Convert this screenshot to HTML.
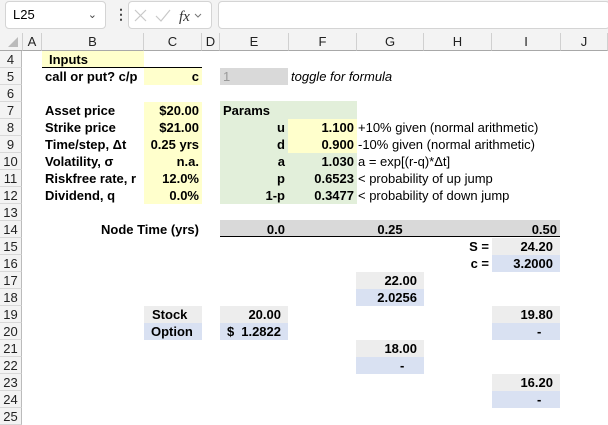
<!DOCTYPE html><html><head><style>
body{margin:0;width:608px;height:414px;overflow:hidden;background:#fff;font-family:"Liberation Sans",Arial,sans-serif;position:relative}
.a{position:absolute;box-sizing:border-box}
.c{position:absolute;box-sizing:border-box;height:17px;line-height:17px;font-size:13px;font-weight:bold;white-space:nowrap;padding:0 3px;color:#000}
.r{text-align:right}.m{text-align:center}
.y{background:#ffffcc}.g{background:#e2efda}.gr{background:#ededed}.bl{background:#d9e1f2}
.n{font-weight:normal}
.rh{position:absolute;left:0;width:22px;height:17px;line-height:17px;font-size:13px;text-align:center;color:#222;border-bottom:1px solid #d8d8d8;border-right:1px solid #bbb;background:#f3f3f3;box-sizing:border-box}
.ch{position:absolute;top:33px;height:18px;line-height:18px;font-size:13px;text-align:center;color:#222;border-right:1px solid #d0d0d0;border-bottom:1px solid #a8a8a8;background:#f3f3f3;box-sizing:border-box}
</style></head><body>
<div class="a" style="left:0;top:0;width:608px;height:33px;background:#f3f3f3"></div>
<div class="a" style="left:5px;top:1px;width:101px;height:28px;background:#fff;border:1px solid #d4d4d4;border-radius:4px;font-size:13px;line-height:26px;padding-left:7px">L25<span style="position:absolute;right:8px;top:0;font-size:11px;color:#444">&#8964;</span></div>
<div class="a" style="left:114px;top:6px;font-size:14px;color:#444;font-weight:bold">⋮</div>
<div class="a" style="left:128px;top:1px;width:84px;height:28px;background:#fff;border:1px solid #d4d4d4;border-radius:4px">
<svg width="84" height="28" style="position:absolute;left:0;top:0"><path d="M6 8l11 11M17 8L6 19" stroke="#c8c8c8" stroke-width="1.2" fill="none"/><path d="M27 14l5 5 9-11" stroke="#c8c8c8" stroke-width="1.2" fill="none"/><text x="50" y="19" font-family="Liberation Serif" font-style="italic" font-size="15" fill="#333">fx</text><path d="M66 12l3 3 3-3" stroke="#777" fill="none"/></svg></div>
<div class="a" style="left:218px;top:1px;width:392px;height:28px;background:#fff;border:1px solid #d4d4d4;border-radius:4px"></div>
<div class="ch" style="left:0;width:23px"><svg width="12" height="12" style="position:absolute;right:3px;bottom:2px"><path d="M11 1V11H1Z" fill="#bbb"/></svg></div>
<div class="ch" style="left:23px;width:19px">A</div>
<div class="ch" style="left:42px;width:102px">B</div>
<div class="ch" style="left:144px;width:58px">C</div>
<div class="ch" style="left:202px;width:18px">D</div>
<div class="ch" style="left:220px;width:69px">E</div>
<div class="ch" style="left:289px;width:68px">F</div>
<div class="ch" style="left:357px;width:67px">G</div>
<div class="ch" style="left:424px;width:68px">H</div>
<div class="ch" style="left:492px;width:69px">I</div>
<div class="ch" style="left:561px;width:47px">J</div>
<div class="rh" style="top:51px">4</div><div class="rh" style="top:68px">5</div><div class="rh" style="top:85px">6</div><div class="rh" style="top:102px">7</div><div class="rh" style="top:119px">8</div><div class="rh" style="top:136px">9</div><div class="rh" style="top:153px">10</div><div class="rh" style="top:170px">11</div><div class="rh" style="top:187px">12</div><div class="rh" style="top:204px">13</div><div class="rh" style="top:221px">14</div><div class="rh" style="top:238px">15</div><div class="rh" style="top:255px">16</div><div class="rh" style="top:272px">17</div><div class="rh" style="top:289px">18</div><div class="rh" style="top:306px">19</div><div class="rh" style="top:323px">20</div><div class="rh" style="top:340px">21</div><div class="rh" style="top:357px">22</div><div class="rh" style="top:374px">23</div><div class="rh" style="top:391px">24</div><div class="rh" style="top:408px">25</div>

<div class="c y" style="left:42px;top:51px;width:102px;padding-left:7px">Inputs</div>
<div class="a" style="left:42px;top:67px;width:160px;height:1px;background:#000"></div>
<div class="c" style="left:42px;top:68px;width:102px">call or put? c/p</div>
<div class="c y r" style="left:144px;top:68px;width:58px">c</div>
<div class="c n" style="left:220px;top:68px;width:68px;background:#d9d9d9;color:#999">1</div>
<div class="c n" style="left:288px;top:68px;font-style:italic">toggle for formula</div>

<div class="c" style="left:42px;top:102px">Asset price</div><div class="c y r" style="left:144px;top:102px;width:58px">$20.00</div>
<div class="c" style="left:42px;top:119px">Strike price</div><div class="c y r" style="left:144px;top:119px;width:58px">$21.00</div>
<div class="c" style="left:42px;top:136px">Time/step, Δt</div><div class="c y r" style="left:144px;top:136px;width:58px">0.25 yrs</div>
<div class="c" style="left:42px;top:153px">Volatility, σ</div><div class="c y r" style="left:144px;top:153px;width:58px">n.a.</div>
<div class="c" style="left:42px;top:170px">Riskfree rate, r</div><div class="c y r" style="left:144px;top:170px;width:58px">12.0%</div>
<div class="c" style="left:42px;top:187px">Dividend, q</div><div class="c y r" style="left:144px;top:187px;width:58px">0.0%</div>

<div class="a g" style="left:220px;top:101px;width:137px;height:103px"></div>
<div class="c" style="left:220px;top:102px">Params</div>
<div class="c r" style="left:220px;top:119px;width:68px">u</div><div class="c y r" style="left:288px;top:119px;width:69px">1.100</div><div class="c n" style="left:355px;top:119px">+10% given (normal arithmetic)</div>
<div class="c r" style="left:220px;top:136px;width:68px">d</div><div class="c y r" style="left:288px;top:136px;width:69px">0.900</div><div class="c n" style="left:355px;top:136px">-10% given (normal arithmetic)</div>
<div class="c r" style="left:220px;top:153px;width:68px">a</div><div class="c r" style="left:288px;top:153px;width:69px">1.030</div><div class="c n" style="left:355px;top:153px">a = exp[(r-q)*Δt]</div>
<div class="c r" style="left:220px;top:170px;width:68px">p</div><div class="c r" style="left:288px;top:170px;width:69px">0.6523</div><div class="c n" style="left:355px;top:170px">&lt; probability of up jump</div>
<div class="c r" style="left:220px;top:187px;width:68px">1-p</div><div class="c r" style="left:288px;top:187px;width:69px">0.3477</div><div class="c n" style="left:355px;top:187px">&lt; probability of down jump</div>

<div class="c r" style="left:42px;top:221px;width:160px">Node Time (yrs)</div>
<div class="a" style="left:220px;top:220px;width:340px;height:17px;background:#d9d9d9;border-bottom:1px solid #000"></div>
<div class="c r" style="left:220px;top:221px;width:68px">0.0</div>
<div class="c m" style="left:356px;top:221px;width:68px">0.25</div>
<div class="c r" style="left:492px;top:221px;width:68px">0.50</div>

<div class="c r" style="left:424px;top:238px;width:68px">S =</div><div class="c gr r" style="left:492px;top:238px;width:68px;padding-right:7px">24.20</div>
<div class="c r" style="left:424px;top:255px;width:68px">c =</div><div class="c bl r" style="left:492px;top:255px;width:68px;padding-right:7px">3.2000</div>
<div class="c gr r" style="left:356px;top:272px;width:68px;padding-right:7px">22.00</div>
<div class="c bl r" style="left:356px;top:289px;width:68px;padding-right:7px">2.0256</div>
<div class="c gr" style="left:144px;top:306px;width:58px;padding-left:8px">Stock</div>
<div class="c bl" style="left:144px;top:323px;width:58px;padding-left:7px">Option</div>
<div class="c gr r" style="left:220px;top:306px;width:68px;padding-right:7px">20.00</div>
<div class="c bl r" style="left:220px;top:323px;width:68px;padding-right:7px"><span style="position:absolute;left:7px">$</span>1.2822</div>
<div class="c gr r" style="left:492px;top:306px;width:68px;padding-right:7px">19.80</div>
<div class="c bl" style="left:492px;top:323px;width:68px;padding-left:45px">-</div>
<div class="c gr r" style="left:356px;top:340px;width:68px;padding-right:7px">18.00</div>
<div class="c bl" style="left:356px;top:357px;width:68px;padding-left:44px">-</div>
<div class="c gr r" style="left:492px;top:374px;width:68px;padding-right:7px">16.20</div>
<div class="c bl" style="left:492px;top:391px;width:68px;padding-left:45px">-</div>
</body></html>
